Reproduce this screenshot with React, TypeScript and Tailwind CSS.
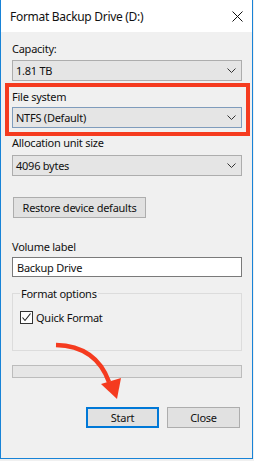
import React from "react";

const font = { fontFamily: '"Noto Sans", "Open Sans", sans-serif' };

const Chevron = () => (
  <svg width="9" height="5" viewBox="0 0 9 5" className="shrink-0">
    <polyline points="0.5,0.5 4.5,4.5 8.5,0.5" fill="none" stroke="#333" strokeWidth="1" />
  </svg>
);

const Combo = ({ value, border = "border-[#adadad]" }: { value: string; border?: string }) => (
  <div className={`flex h-[21px] w-[230px] items-center justify-between border ${border} bg-[#e5e5e5] pl-[3px] pr-[5px]`}>
    <span className="leading-[15px]">{value}</span>
    <Chevron />
  </div>
);

const Label = ({ children, mt }: { children: React.ReactNode; mt: string }) => (
  <div className={`${mt} h-[15px] leading-[15px]`}>{children}</div>
);

export default function App() {
  return (
    <div className="min-h-screen bg-[#f0f0f0]" style={font}>
      <div className="relative flex h-[459px] w-[253px] flex-col border-x border-b border-[#1883d7] bg-[#f0f0f0] text-[11px] tracking-[-0.25px] text-[#111]">
        {/* title bar */}
        <div className="flex h-[32px] shrink-0 items-start justify-between bg-white pl-[9px] pr-[9px] pt-[9px]">
          <span className="text-[12px] leading-[16px] tracking-[-0.3px]">Format Backup Drive (D:)</span>
          <svg width="11" height="11" viewBox="0 0 11 11" className="mt-[2px]">
            <path d="M0.5 0.5 L10.5 10.5 M10.5 0.5 L0.5 10.5" stroke="#111" strokeWidth="1" />
          </svg>
        </div>

        {/* body */}
        <div className="flex flex-col pl-[11px]">
          <Label mt="mt-[9px]">Capacity:</Label>
          <div className="mt-[4px]">
            <Combo value="1.81 TB" />
          </div>

          <Label mt="mt-[8px]">File system</Label>
          <div className="mt-[3px]">
            <Combo value="NTFS (Default)" border="border-[#7f9cbc]" />
          </div>

          <Label mt="mt-[7px]">Allocation unit size</Label>
          <div className="mt-[5px]">
            <Combo value="4096 bytes" />
          </div>

          <button className="ml-[1px] mt-[21px] flex h-[21px] w-[133px] items-center justify-center border border-[#adadad] bg-[#e1e1e1] leading-[15px]">
            Restore device defaults
          </button>

          <Label mt="mt-[21px]">Volume label</Label>
          <div className="mt-[3px] flex h-[20px] w-[230px] items-center border border-[#7a7a7a] bg-white pl-[4px]">
            <span className="leading-[15px]">Backup Drive</span>
          </div>

          <fieldset className="mt-[9px] h-[65px] w-[230px] border border-[#dcdcdc] pl-[7px]">
            <legend className="px-[1px] leading-[15px]">Format options</legend>
            <label className="mt-[9px] flex items-center gap-[3px]">
              <span className="flex h-[13px] w-[13px] items-center justify-center border border-[#333] bg-white">
                <svg width="11" height="11" viewBox="0 0 11 11">
                  <polyline points="1.5,5.5 4,8.5 9.5,1.5" fill="none" stroke="#222" strokeWidth="1.1" />
                </svg>
              </span>
              <span className="leading-[15px]">Quick Format</span>
            </label>
          </fieldset>

          <div className="mt-[14px] h-[13px] w-[230px] border border-[#bcbcbc] bg-[#e6e6e6]" />

          <div className="mt-[29px] flex w-[228px] justify-end gap-[8px]">
            <button className="flex h-[21px] w-[73px] items-center justify-center border-2 border-[#0078d7] bg-[#e1e1e1] leading-[15px]">
              Start
            </button>
            <button className="flex h-[21px] w-[73px] items-center justify-center border border-[#adadad] bg-[#e1e1e1] leading-[15px]">
              Close
            </button>
          </div>
        </div>

        {/* annotation: highlight box */}
        <div className="pointer-events-none absolute left-[4px] top-[83px] h-[53px] w-[245px] border-4 border-[#f53b1f]" />

        {/* annotation: arrow */}
        <svg className="pointer-events-none absolute left-[-1px] top-0" width="253" height="459" viewBox="0 0 253 459">
          <path d="M56 345 Q 96 346 109 382" fill="none" stroke="#f53b1f" strokeWidth="4.5" />
          <polygon points="101,384 121,378 117,399" fill="#f53b1f" />
        </svg>
      </div>
    </div>
  );
}
